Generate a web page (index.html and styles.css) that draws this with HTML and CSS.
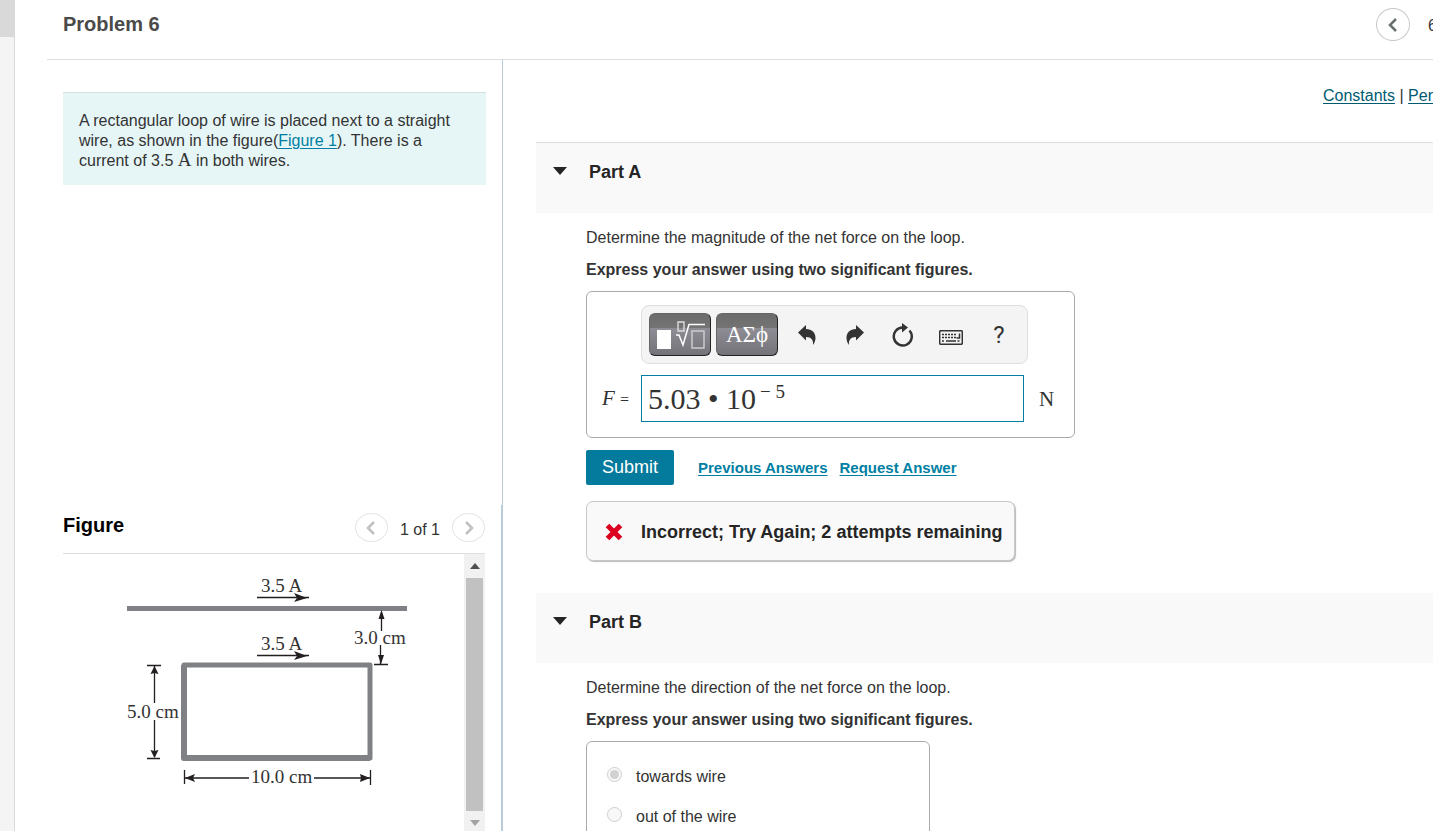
FILE: index.html
```html
<!DOCTYPE html>
<html lang="en">
<head>
    <meta charset="UTF-8">
    <meta name="viewport" content="width=device-width, initial-scale=1.0">
    <title>Problem 6</title>
    <link rel="stylesheet" href="styles.css">
</head>
<body>

    <div class="side-strip">
        <div class="side-thumb"></div>
    </div>

    <div class="page">
        <header class="page-header">
            <h1>Problem 6</h1>
            <nav class="pager">
                <button class="round-btn" type="button" aria-label="Previous item">
                    <svg width="12" height="18" viewBox="0 0 12 18"><path d="M9 3L3 9l6 6" fill="none" stroke="currentColor" stroke-width="2.500"/></svg>
                </button>
                <span>6 of 20</span>
            </nav>
        </header>

        <main class="columns">
            <!-- Problem text and figure -->
            <aside class="left">
                <p class="statement">A rectangular loop of wire is placed next to a straight wire, as shown in the figure(<a href="#figure">Figure 1</a>). There is a current of 3.5 <span class="unit">A</span> in both wires.</p>

                <section class="figure" id="figure">
                    <div class="figure-head">
                        <h2>Figure</h2>
                        <div class="figure-nav">
                            <button class="round-btn small" type="button" aria-label="Previous figure" disabled>
                                <svg width="12" height="18" viewBox="0 0 12 18"><path d="M9 3L3 9l6 6" fill="none" stroke="currentColor" stroke-width="2.500"/></svg>
                            </button>
                            <span>1 of 1</span>
                            <button class="round-btn small" type="button" aria-label="Next figure" disabled>
                                <svg width="12" height="18" viewBox="0 0 12 18"><path d="M3 3l6 6-6 6" fill="none" stroke="currentColor" stroke-width="2.500"/></svg>
                            </button>
                        </div>
                    </div>
                    <div class="figure-body">
                        <svg class="diagram" width="400" height="277" viewBox="0 0 400 277" role="img" aria-label="Loop next to a straight wire">
                            <!-- straight wire and loop -->
                            <path d="M64 54.5H344" stroke="#808184" stroke-width="5"/>
                            <path d="M121 111H307V204H121Z" fill="none" stroke="#808184" stroke-width="5" stroke-linejoin="round"/>
                            <path d="M121 111V204H307" fill="none" stroke="#808184" stroke-width="6" stroke-linejoin="round"/>
                            <!-- current arrows and dimensions -->
                            <g stroke="#231f20" fill="none">
                                <path d="M194 43.5H246M194 101.5H246" stroke-width="1.5"/>
                                <path d="M318.500 58V77M317.500 91V110M311 110.500H325" stroke-width="1.3"/>
                                <path d="M91.500 112V149M91.500 166V203M84 111.500H98M84 204.500H97" stroke-width="1.3"/>
                                <path d="M121.500 216V230M121 224H186M251 224H308M307.500 216V231" stroke-width="1.3"/>
                            </g>
                            <g fill="#231f20">
                                <path d="M244 44l-13-5 3 5-3 4zM244 102l-13-5 3 5-3 4z"/>
                                <path d="M318.500 56l3 9h-6zM318 110l3-9h-6z"/>
                                <path d="M91.500 112l4 8-4-1-4 1zM91.500 204l4-8-4 1-4-1z"/>
                                <path d="M122 224l10-4-2 4 2 4zM307 224l-10-4 1 4-1 4z"/>
                            </g>
                            <g class="diagram-text">
                                <text x="198" y="38">3.5 A</text>
                                <text x="198" y="96">3.5 A</text>
                                <text x="291" y="90">3.0 cm</text>
                                <text x="64" y="164">5.0 cm</text>
                                <text x="188" y="229">10.0 cm</text>
                            </g>
                        </svg>
                        <div class="scrollbar">
                            <svg width="10" height="6" viewBox="0 0 10 6"><path d="M0 6l5-6 5 6z" fill="#505050"/></svg>
                            <div class="scroll-thumb"></div>
                            <svg width="10" height="6" viewBox="0 0 10 6"><path d="M0 0l5 6 5-6z" fill="#a3a3a3"/></svg>
                        </div>
                    </div>
                </section>
            </aside>

            <!-- Parts -->
            <div class="right">
                <div class="resources">
                    <a href="#constants">Constants</a> | <a href="#table">Periodic Table</a>
                </div>

                <section class="part">
                    <div class="part-head">
                        <svg width="14" height="8" viewBox="0 0 14 8"><path d="M0 0h14L7 8z" fill="#252525"/></svg>
                        <h2>Part A</h2>
                    </div>
                    <div class="part-body">
                        <p>Determine the magnitude of the net force on the loop.</p>
                        <p><strong>Express your answer using two significant figures.</strong></p>

                        <div class="answer">
                            <div class="toolbar">
                                <button class="dark-btn" type="button" aria-label="Templates">
                                    <svg width="50" height="30" viewBox="0 0 50 30">
                                        <path d="M2 10h14v19H2z" fill="#fff"/>
                                        <path d="M23 2h6v9h-6z" fill="none" stroke="#ddd" stroke-width="1.400"/>
                                        <path d="M21 15h3l4 10 6-20.500h16" fill="none" stroke="#fff" stroke-width="1.500"/>
                                        <path d="M37 11h12v17H37z" fill="none" stroke="#ccc" stroke-width="1.500"/>
                                    </svg>
                                </button>
                                <button class="dark-btn" type="button">ΑΣϕ</button>
                                <div class="icons">
                                    <button type="button" aria-label="Undo">
                                        <svg width="18" height="20" viewBox="0 0 18 20"><path d="M0 7.500L8 0v4c6 0 9.500 3.500 9.500 9 0 2.500-1 5-2.500 7 .500-5-1.500-8-7-8v3.500z" fill="#333"/></svg>
                                    </button>
                                    <button type="button" aria-label="Redo">
                                        <svg width="18" height="20" viewBox="0 0 18 20"><path d="M18 7.500L10 0v4C4 4 .500 7.500 .500 13c0 2.500 1 5 2.500 7-.500-5 1.500-8 7-8v3.500z" fill="#333"/></svg>
                                    </button>
                                    <button type="button" aria-label="Reset">
                                        <svg width="22" height="24" viewBox="0 0 22 24"><path d="M17.500 7.500A9 9 0 1 1 11 4.500" fill="none" stroke="#333" stroke-width="2.500"/><path d="M10 0l6 4.500-6 5z" fill="#333"/></svg>
                                    </button>
                                    <button class="low" type="button" aria-label="Keyboard">
                                        <svg width="24" height="15" viewBox="0 0 24 15"><rect x=".7" y=".7" width="22.600" height="13.600" rx="1" fill="none" stroke="#333" stroke-width="1.500"/><path d="M3 4.500h15M3 7.500h15" stroke="#333" stroke-width="1.500" stroke-dasharray="2 1"/><path d="M20.500 3.500v4.500h-3M3 11h2M7 11h10M18.500 11h2" fill="none" stroke="#333" stroke-width="1.500"/></svg>
                                    </button>
                                    <button class="help" type="button" aria-label="Help">?</button>
                                </div>
                            </div>
                            <span class="symbol" id="force-label"><i>F</i> <small>=</small></span>
                            <div class="math-input" role="textbox" contenteditable="true" spellcheck="false" aria-labelledby="force-label">5.03 • 10<sup>− 5</sup></div>
                            <span class="newton">N</span>
                        </div>

                        <div class="actions">
                            <button class="submit" type="submit">Submit</button>
                            <a href="#previous">Previous Answers</a>
                            <a href="#request">Request Answer</a>
                        </div>

                        <div class="feedback">
                            <svg width="18" height="18" viewBox="0 0 18 18"><path d="M2.500 2.500l13 13M15.500 2.500l-13 13" stroke="#db0020" stroke-width="5"/></svg>
                            <span>Incorrect; Try Again; 2 attempts remaining</span>
                        </div>
                    </div>
                </section>

                <section class="part">
                    <div class="part-head plain">
                        <svg width="14" height="8" viewBox="0 0 14 8"><path d="M0 0h14L7 8z" fill="#252525"/></svg>
                        <h2>Part B</h2>
                    </div>
                    <div class="part-body">
                        <p>Determine the direction of the net force on the loop.</p>
                        <p><strong>Express your answer using two significant figures.</strong></p>

                        <div class="choices">
                            <label><input type="radio" name="direction" checked disabled>towards wire</label>
                            <label><input type="radio" name="direction" disabled>out of the wire</label>
                        </div>
                    </div>
                </section>
            </div>
        </main>
    </div>

</body>
</html>
```
FILE: styles.css
```css
* {
    box-sizing: border-box;
    margin: 0;
    padding: 0;
}

body {
    display: flex;
    height: 100vh;
    overflow: hidden;
    background-color: #fff;
    color: #333;
    font-family: "Liberation Sans", Arial, sans-serif;
    font-size: 16px;
    line-height: 20px;
}

button {
    border: none;
    background: none;
    font-family: inherit;
    cursor: pointer;
}

a {
    color: #007fa3;
    text-underline-offset: 2px;
}

/* Strip on the far left */
.side-strip {
    flex: 0 0 15px;
    background-color: #f4f4f4;
    border-right: 1px solid #d9d9d9;
}

.side-thumb {
    height: 37px;
    background-color: #d9d9d9;
}

/* The page is wider than the window and runs past its right edge */
.page {
    flex: 0 0 calc(100% + 64px);
    display: flex;
    flex-direction: column;
    padding-left: 32px;
}

.page-header {
    display: flex;
    justify-content: space-between;
    height: 60px;
    padding: 8px 16px 0;
    border-bottom: 1px solid #dedede;
}

h1 {
    color: #4a4a4a;
    font-size: 20px;
    line-height: 32px;
}

.pager {
    display: flex;
    gap: 18px;
    width: 120px;
    line-height: 36px;
    white-space: nowrap;
}

.round-btn {
    display: flex;
    flex: none;
    align-items: center;
    justify-content: center;
    width: 34px;
    height: 33px;
    border: 1px solid #c7c7c7;
    border-radius: 50%;
    color: #6a7070;
}

.round-btn.small {
    width: 33px;
    height: 29px;
    border-color: #e5e5e5;
    color: #c0c0c0;
}

.columns {
    display: flex;
    flex: 1;
    min-height: 0;
}

/* Left column */
.left {
    display: flex;
    flex: 0 0 455px;
    flex-direction: column;
    justify-content: space-between;
    padding: 32px 0 0 16px;
}

.statement {
    margin-right: 16px;
    padding: 18px 16px 14px;
    border-top: 1px solid #d5e0e0;
    background-color: #e6f6f7;
}

.unit {
    font-family: "Liberation Serif", "Times New Roman", serif;
    font-size: 19px;
    line-height: 16px;
}

.figure {
    padding-right: 16px;
    border-right: 1px solid #b8cbd9;
}

.figure-head {
    display: flex;
    justify-content: space-between;
    height: 49px;
    padding-top: 8px;
    border-bottom: 1px solid #dedede;
}

.figure-head h2 {
    color: #000;
    font-size: 20px;
    line-height: 24px;
}

.figure-nav {
    display: flex;
    gap: 12px;
    line-height: 34px;
}

.figure-body {
    display: flex;
    justify-content: space-between;
}

.diagram-text {
    fill: #333;
    font-family: "Liberation Serif", "Times New Roman", serif;
    font-size: 19px;
}

.scrollbar {
    display: flex;
    flex: 0 0 21px;
    flex-direction: column;
    align-items: center;
    gap: 9px;
    padding: 9px 2px 5px;
    background-color: #f1f1f1;
}

.scroll-thumb {
    flex: 1;
    align-self: stretch;
    background-color: #c1c1c1;
}

/* Right column */
.right {
    flex: 1;
    padding: 26px 0 0 33px;
    border-left: 1px solid #b8cbd9;
    overflow: hidden;
}

.resources {
    width: 189px;
    margin-bottom: 36px;
    margin-left: auto;
    white-space: nowrap;
}

.resources a {
    color: #005a70;
}

.part {
    margin-bottom: 32px;
}

.part-head {
    display: flex;
    gap: 22px;
    padding: 19px 17px 31px;
    border-top: 1px solid #dedede;
    background-color: #f9f9f9;
}

.part-head.plain {
    border-top: none;
}

.part-head svg {
    margin-top: 5px;
}

.part-head h2 {
    color: #252525;
    font-size: 18px;
    line-height: 20px;
}

.part-body {
    padding: 15px 0 0 50px;
}

.part-body p {
    margin-bottom: 12px;
}

.part-body p + p {
    margin-bottom: 11px;
}

/* Answer box */
.answer {
    display: grid;
    grid-template-columns: 39px 383px auto;
    width: fit-content;
    padding: 13px 20px 15px 15px;
    border: 1px solid #aaa;
    border-radius: 6px;
    row-gap: 11px;
    align-items: center;
    font-family: "Liberation Serif", "Times New Roman", serif;
    font-size: 21px;
}

.toolbar {
    display: flex;
    grid-column: 2 / 4;
    gap: 5px;
    width: 387px;
    height: 59px;
    padding: 7px 0 7px 7px;
    border: 1px solid #dedede;
    border-radius: 8px;
    background-color: #f4f4f4;
}

.dark-btn {
    display: flex;
    flex: none;
    align-items: center;
    justify-content: center;
    width: 62px;
    height: 43px;
    border: 1px solid #666;
    border-right-color: #222;
    border-bottom-color: #222;
    border-radius: 6px;
    background: linear-gradient(#6b6b6b, #747474 34%, #8e8d95 35%, #747379);
    color: #fff;
    font-family: "Liberation Serif", "Times New Roman", serif;
    font-size: 23px;
}

.icons {
    display: flex;
}

.icons button {
    display: flex;
    align-items: center;
    justify-content: center;
    width: 48px;
}

.icons .low {
    padding-top: 5px;
}

.icons .help {
    color: #333;
    font-family: Roboto, sans-serif;
    font-size: 24px;
}

.symbol {
    white-space: nowrap;
}

.symbol small {
    font-size: 16px;
}

.math-input {
    height: 47px;
    padding: 0 6px;
    border: 1px solid #007fa3;
    font-size: 30px;
    line-height: 45px;
    white-space: nowrap;
    outline: none;
}

.math-input sup {
    margin-left: 4px;
    font-size: 19px;
    line-height: 0;
}

.newton {
    padding: 0 0 0 15px;
}

.actions {
    display: flex;
    gap: 12px;
    align-items: center;
    margin: 12px 0 16px;
}

.actions a {
    font-size: 15px;
    font-weight: bold;
}

.submit {
    height: 35px;
    margin-right: 12px;
    padding: 0 16px;
    border-radius: 2px;
    background-color: #047a9c;
    color: #fff;
    font-size: 18px;
}

.feedback {
    display: flex;
    gap: 18px;
    align-items: center;
    width: fit-content;
    height: 60px;
    padding: 2px 12px 0 18px;
    border: 1px solid #c7c7c7;
    border-radius: 7px;
    background-color: #f9f9f9;
    box-shadow: 1px 1px 1px #bbb;
    color: #252525;
    font-size: 18px;
    font-weight: bold;
}

/* Radio choices */
.choices {
    display: flex;
    flex-direction: column;
    gap: 20px;
    width: 344px;
    padding: 25px 20px;
    border: 1px solid #aaa;
    border-radius: 6px;
}

.choices label {
    display: flex;
    gap: 14px;
}

.choices input {
    width: 15px;
    height: 15px;
}
```
